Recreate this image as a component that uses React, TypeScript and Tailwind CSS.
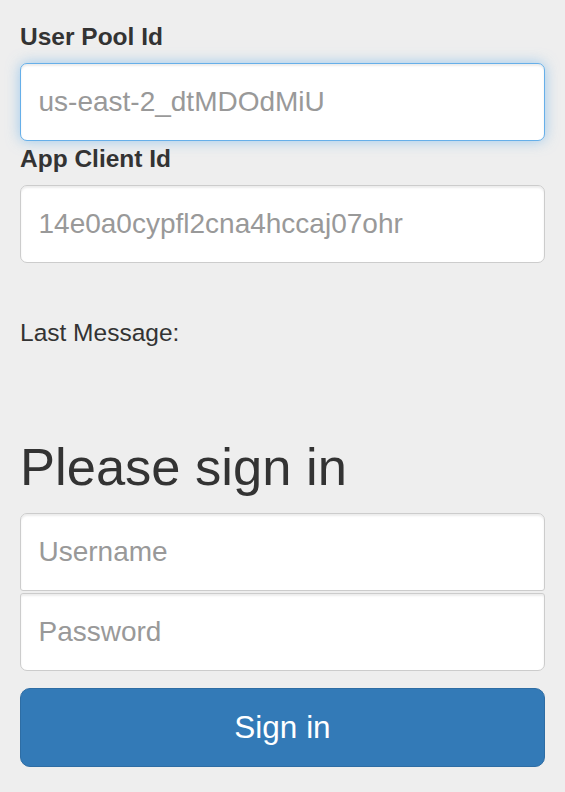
export default function App() {
  const inputCls =
    'block w-full h-[78px] px-[17.5px] bg-white border border-[#ccc] rounded-[7px] text-[28px] text-[#555] placeholder:text-[#999] outline-none shadow-[inset_0_2px_2px_rgba(0,0,0,0.075)]'

  return (
    <div className="min-h-screen bg-[#eee] text-[#333] font-['Liberation_Sans',Arial,sans-serif] px-[20px] pt-[19px] pb-[24px]">
      <label className="block font-bold text-[24.5px] leading-[35px] mb-[9px]">User Pool Id</label>
      <input
        className={inputCls + ' !border-[#66afe9] !shadow-[inset_0_2px_2px_rgba(0,0,0,0.075),0_0_14px_rgba(102,175,233,0.6)]'}
        placeholder="us-east-2_dtMDOdMiU"
      />
      <label className="block font-bold text-[24.5px] leading-[35px] mb-[9px]">App Client Id</label>
      <input className={inputCls} placeholder="14e0a0cypfl2cna4hccaj07ohr" />

      <p className="mt-[52px] text-[24.5px] leading-[35px]">Last Message:</p>

      <form className="mt-[88px]" onSubmit={e => e.preventDefault()}>
        <h2 className="text-[52.5px] leading-[57.75px] font-normal mb-[17.5px]">Please sign in</h2>
        <input className={inputCls + ' rounded-b-[3px]'} placeholder="Username" />
        <input type="password" className={inputCls + ' mt-[1.5px] rounded-t-[3px]'} placeholder="Password" />
        <button className="mt-[17.5px] block w-full h-[79px] bg-[#337ab7] border border-[#2e6da4] rounded-[10px] text-white text-[31.5px]">
          Sign in
        </button>
      </form>
    </div>
  )
}
